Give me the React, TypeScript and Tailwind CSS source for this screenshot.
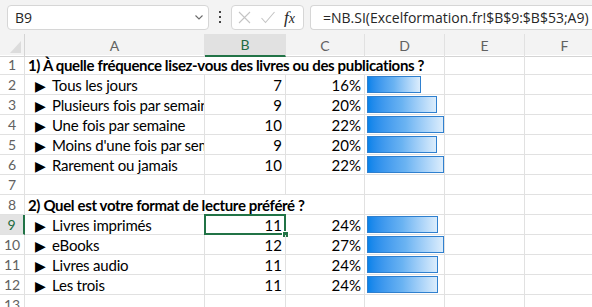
import React from "react";

type Row = {
  n: number;
  title?: string;
  span?: number;
  label?: string;
  count?: number;
  pct?: string;
  bar?: number;
};

const rows: Row[] = [
  { n: 1, title: "1) À quelle fréquence lisez-vous des livres ou des publications ?", span: 4 },
  { n: 2, label: "Tous les jours", count: 7, pct: "16%", bar: 54 },
  { n: 3, label: "Plusieurs fois par semaine", count: 9, pct: "20%", bar: 70 },
  { n: 4, label: "Une fois par semaine", count: 10, pct: "22%", bar: 78 },
  { n: 5, label: "Moins d'une fois par semaine", count: 9, pct: "20%", bar: 70 },
  { n: 6, label: "Rarement ou jamais", count: 10, pct: "22%", bar: 78 },
  { n: 7 },
  { n: 8, title: "2) Quel est votre format de lecture préféré ?", span: 3 },
  { n: 9, label: "Livres imprimés", count: 11, pct: "24%", bar: 71 },
  { n: 10, label: "eBooks", count: 12, pct: "27%", bar: 78 },
  { n: 11, label: "Livres audio", count: 11, pct: "24%", bar: 71 },
  { n: 12, label: "Les trois", count: 11, pct: "24%", bar: 71 },
  { n: 13 },
];

const cell = "h-5 border-b border-r border-[#e1e1e1] overflow-hidden whitespace-nowrap leading-5";
const grid = "grid grid-cols-[25px_180px_81px_79px_80px_80px_80px]";

function Empty() {
  return <div className={cell} />;
}

function SheetRow({ r }: { r: Row }) {
  const selected = r.n === 9;
  return (
    <div className={grid}>
      <div
        className={
          "h-5 border-b border-[#e1e1e1] text-center leading-5 text-[14px] " +
          (selected
            ? "bg-[#e3e3e3] text-[#1e6b41] border-r-2 border-r-[#217346]"
            : "border-r text-[#616161]")
        }
      >
        {r.n}
      </div>
      {r.title ? (
        <>
          <div
            className={
              cell +
              " font-bold tracking-[-0.35px] pl-[3px] text-black " +
              (r.span === 4 ? "col-span-4" : "col-span-3")
            }
          >
            {r.title}
          </div>
          {r.span === 3 && <Empty />}
          <Empty />
          <Empty />
        </>
      ) : r.label ? (
        <>
          <div className={cell + " pl-[10px] tracking-[-0.2px] text-black"}>
            <span className="inline-block w-[17px] font-['DejaVu_Sans'] text-[14px]">▶</span>
            {r.label}
          </div>
          <div className={cell + " relative overflow-visible text-right pr-[3px]"}>
            {r.count}
            {selected && (
              <div className="absolute -left-px -top-px -right-px -bottom-px border-2 border-[#217346]">
                <div className="absolute -right-[5px] -bottom-[5px] h-[7px] w-[7px] border border-white bg-[#217346]" />
              </div>
            )}
          </div>
          <div className={cell + " text-right pr-[3px]"}>{r.pct}</div>
          <div className={cell + " flex items-center pl-[2px]"}>
            <div
              className="h-[17px] border border-[#2f80cf] bg-gradient-to-r from-[#0583ea] via-[#6ab3f2] to-[#dcedfc]"
              style={{ width: r.bar }}
            />
          </div>
          <Empty />
          <Empty />
        </>
      ) : (
        <>
          <Empty />
          <Empty />
          <Empty />
          <Empty />
          <Empty />
          <Empty />
        </>
      )}
    </div>
  );
}

export default function App() {
  return (
    <div className="h-[307px] w-[592px] overflow-hidden bg-white font-['Lato',sans-serif] text-[15px] text-black">
      <div className="flex h-[34px] items-center gap-[6px] bg-[#f3f3f3] pl-[7px] font-['Open_Sans',sans-serif]">
        <div className="flex h-[25px] w-[202px] items-center justify-between rounded-[4px] border border-[#d6d6d6] bg-white pl-[7px] pr-[3px] text-[14px] text-[#262626]">
          <span>B9</span>
          <svg width="12" height="12" viewBox="0 0 12 12" fill="none" stroke="#6b6b6b" strokeWidth="1.1">
            <path d="M2.5 4.5 L6 8 L9.5 4.5" />
          </svg>
        </div>
        <div className="flex w-[10px] flex-col items-center gap-[3px]">
          <div className="h-[2px] w-[2px] bg-[#444]" />
          <div className="h-[2px] w-[2px] bg-[#444]" />
          <div className="h-[2px] w-[2px] bg-[#444]" />
        </div>
        <div className="flex h-[25px] w-[73px] items-center gap-[8px] rounded-[4px] border border-[#d6d6d6] bg-white pl-[5px]">
          <svg width="15" height="15" viewBox="0 0 15 15" stroke="#c4c4c4" strokeWidth="1.1">
            <path d="M2 2 L13 13 M13 2 L2 13" />
          </svg>
          <svg width="16" height="15" viewBox="0 0 16 15" fill="none" stroke="#c4c4c4" strokeWidth="1.1">
            <path d="M1.5 8 L5.5 12.5 L14.5 2" />
          </svg>
          <span className="font-['Liberation_Serif',serif] text-[17px] italic leading-none text-[#262626]">
            f<span className="text-[14px]">x</span>
          </span>
        </div>
        <div className="flex h-[25px] flex-1 items-center rounded-l-[4px] border border-r-0 border-[#d6d6d6] bg-white pl-[12px] text-[14px] text-[#262626]">
          =NB.SI(Excelformation.fr!$B$9:$B$53;A9)
        </div>
      </div>
      <div className={grid + " h-[21px] bg-[#f3f3f3] text-[14px] text-[#616161]"}>
        <div className="relative border-b border-r border-[#d4d4d4]">
          <svg className="absolute bottom-[3px] right-[3px]" width="11" height="12" viewBox="0 0 11 12">
            <path d="M11 0 L11 12 L0 12 Z" fill="#dcdcdc" />
          </svg>
        </div>
        {["A", "B", "C", "D", "E", "F"].map((c) => (
          <div
            key={c}
            className={
              "flex items-center justify-center border-r border-[#e1e1e1] " +
              (c === "B"
                ? "border-b-2 border-b-[#217346] bg-[#e1e1e1] text-[#1e6b41]"
                : "border-b border-b-[#d4d4d4]")
            }
          >
            {c}
          </div>
        ))}
      </div>
      {rows.map((r) => (
        <SheetRow key={r.n} r={r} />
      ))}
    </div>
  );
}
